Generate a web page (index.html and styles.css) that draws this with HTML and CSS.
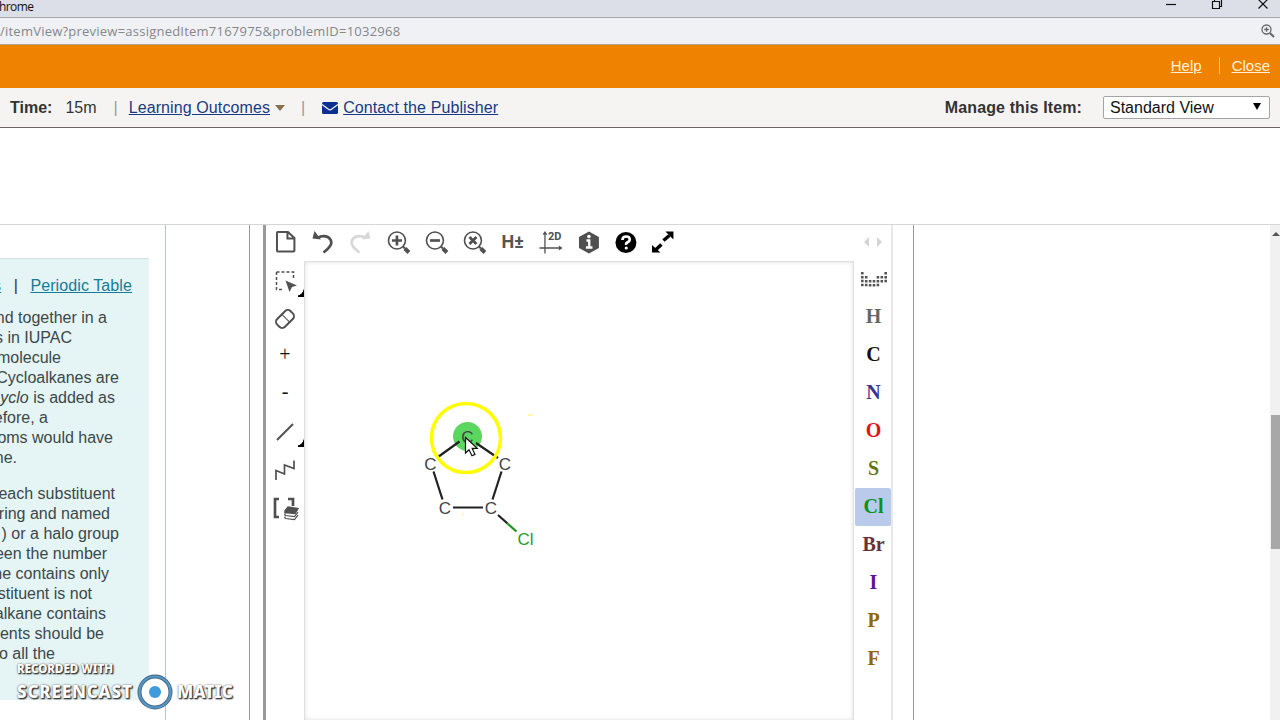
FILE: index.html
```html
<!DOCTYPE html>
<html lang="en">
<head>
    <meta charset="UTF-8">
    <meta name="viewport" content="width=device-width, initial-scale=1.0">
    <title>Item View</title>
    <link rel="stylesheet" href="styles.css">
</head>
<body>
    <div class="titlebar">
        <span class="window-title">hrome</span>
        <div class="window-controls">
            <svg width="12" height="12" viewBox="0 0 12 12"><path d="M1 6.5h10"/></svg>
            <svg width="12" height="12" viewBox="0 0 12 12"><path d="M1.5 3.5h7v7h-7zM3.5 3.5v-2h7v7h-2"/></svg>
            <svg width="12" height="12" viewBox="0 0 12 12"><path d="M1.5 1.5l9 9M10.5 1.5l-9 9"/></svg>
        </div>
    </div>

    <div class="address-bar">
        <span class="url">/itemView?preview=assignedItem7167975&amp;problemID=1032968</span>
        <svg class="zoom-icon" width="14" height="14" viewBox="0 0 14 14"><circle cx="5.5" cy="5.5" r="4.5"/><path d="M3.2 5.5h4.6M5.5 3.2v4.6"/><path class="handle" d="M9 9l4 4"/></svg>
    </div>

    <header class="header">
        <a href="#">Help</a>
        <span class="divider"></span>
        <a href="#">Close</a>
    </header>

    <div class="info-bar">
        <b>Time:</b>
        <span class="time">15m</span>
        <span class="sep">|</span>
        <a href="#">Learning Outcomes</a>
        <span class="caret"></span>
        <span class="sep sep-wide">|</span>
        <svg class="mail" width="16" height="12" viewBox="0 0 16 12"><rect width="16" height="12" rx="1.5" fill="#0b3190"/><path d="M0 2.5L6.5 7.3q1.5 1 3 0L16 2.5" fill="none" stroke="#f6f4f3" stroke-width="1.3"/></svg>
        <a href="#">Contact the Publisher</a>
        <b class="manage">Manage this Item:</b>
        <div class="select"><span>Standard View</span><span class="select-arrow"></span></div>
    </div>

    <div class="spacer"></div>

    <main class="main">
        <section class="hint-pane">
            <div class="hint-box">
                <div class="links"><a href="#">s</a><span>|</span><a href="#">Periodic Table</a></div>
                <p>
                    <span class="line w107">nd together in a</span>
                    <span class="line w72">s in IUPAC</span>
                    <span class="line w61">molecule</span>
                    <span class="line w119">Cycloalkanes are</span>
                    <span class="line w115"><i>yclo</i> is added as</span>
                    <span class="line w48">efore, a</span>
                    <span class="line w113">oms would have</span>
                    <span class="line w17">ne.</span>
                </p>
                <p>
                    <span class="line w115">each substituent</span>
                    <span class="line w110">ring and named</span>
                    <span class="line w119">) or a halo group</span>
                    <span class="line w107">een the number</span>
                    <span class="line w109">ne contains only</span>
                    <span class="line w92">stituent is not</span>
                    <span class="line w106">alkane contains</span>
                    <span class="line w104">ents should be</span>
                    <span class="line w55">o all the</span>
                </p>
            </div>
        </section>
        <div class="gutter"></div>

        <section class="editor">
            <div class="toolbar">
                <svg class="tool" viewBox="0 0 38 36"><path d="M10 7h11l6.5 6v12.5q0 1-1 1h-15.5q-1 0-1-1v-17.500q0-1 1-1zM20.500 7v6.500h7"/></svg>
                <svg class="tool" viewBox="0 0 38 36"><path class="thick" d="M14 12.500q9-3.500 12.500 2t-7 13"/><path class="solid" d="M8.500 13.500l2-7.500 6.500 8.500z"/></svg>
                <svg class="tool faded" viewBox="0 0 38 36"><path class="thick" d="M23 12.500q-9-3.500-12.500 2t7 13"/><path class="solid" d="M28.500 13.500l-2-7.500-6.500 8.500z"/></svg>
                <svg class="tool" viewBox="0 0 38 36"><circle class="lens" cx="17" cy="15.500" r="8.500"/><path class="thick" d="M12 15.500h10M17 10.500v10"/><path d="M23 21.500l2 2"/><path class="handle" d="M25 23.500l4 4"/></svg>
                <svg class="tool" viewBox="0 0 38 36"><circle class="lens" cx="17" cy="15.500" r="8.500"/><path class="thick" d="M12 15.500h10"/><path d="M23 21.500l2 2"/><path class="handle" d="M25 23.500l4 4"/></svg>
                <svg class="tool" viewBox="0 0 38 36"><circle class="lens" cx="17" cy="15.500" r="8.500"/><path class="thick" d="M13.500 12l7 7M20.500 12l-7 7"/><path d="M23 21.500l2 2"/><path class="handle" d="M25 23.500l4 4"/></svg>
                <span class="tool hydrogen">H±</span>
                <svg class="tool" viewBox="0 0 38 36"><path class="thin" d="M13 7.500v21M7.500 23h21.500M11.300 9.500l1.700-2.500 1.700 2.500M27 21.300l2.500 1.700-2.500 1.700"/><text x="16" y="15">2D</text></svg>
                <svg class="tool" viewBox="0 0 38 36"><path class="solid" d="M19 6.500l10 5.500v11l-10 5.500-10-5.500v-11z"/><path d="M16.500 15.500h2.800v7M16 22.500h6.500" stroke="#fff" stroke-width="2.300"/><circle cx="19" cy="11.500" r="1.800" fill="#fff" stroke="none"/></svg>
                <svg class="tool" viewBox="0 0 38 36"><circle cx="18" cy="17.500" r="10.500" fill="#000" stroke="none"/><path d="M14.500 15q0-3.500 3.700-3.500t3.600 3q0 1.700-2 2.700t-1.500 2.600" stroke="#fff" stroke-width="2.700"/><circle cx="18.300" cy="23" r="1.600" fill="#fff" stroke="none"/></svg>
                <svg class="tool" viewBox="0 0 38 36"><path d="M18.500 15.500l6-5M16.500 19.500l-5.500 5" stroke="#000" stroke-width="3.500"/><path d="M20.500 6.500h8v8zM7 20v7.500h8.500z" fill="#000" stroke="none"/></svg>
                <div class="nav-arrows"><span class="prev"></span><span class="next"></span></div>
            </div>

            <div class="workspace">
                <div class="side-tools">
                    <div class="side-tool">
                        <svg width="24" height="24" viewBox="0 0 24 24"><path d="M3.500 3h17v7M3.500 3v17.500h7" stroke-width="1.500" stroke-dasharray="3 2" fill="none"/><path d="M12.500 11.500l11.500 5-5 1.500-2.500 5z" fill="#505050" stroke="none"/></svg>
                        <span class="corner"></span>
                    </div>
                    <div class="side-tool">
                        <svg width="24" height="24" viewBox="0 0 24 24"><g transform="rotate(-45 12 12)"><rect x="2.500" y="6.500" width="19" height="11" rx="4" stroke-width="2"/><path d="M13 6.500v11" stroke-width="1"/></g></svg>
                    </div>
                    <div class="side-tool"><span class="sign">+</span></div>
                    <div class="side-tool"><span class="sign minus">-</span></div>
                    <div class="side-tool">
                        <svg width="24" height="24" viewBox="0 0 24 24"><path d="M4 20L20 4" stroke-width="2"/></svg>
                        <span class="corner"></span>
                    </div>
                    <div class="side-tool">
                        <svg width="24" height="24" viewBox="0 0 24 24"><path d="M3 22v-9.500l8.500 3.500v-9l9.500 3.500v-8" stroke-width="1.700"/></svg>
                    </div>
                    <div class="side-tool">
                        <svg width="28" height="26" viewBox="0 0 28 26"><path d="M8 3H4v18h4M17 3h5v7" stroke-width="2.700"/><path d="M14 15l3-4 10 1.500-3 5-10-1z" fill="#505050" stroke-width="1.500"/><path d="M14.500 17.500q-1.500 1.500 0 2l9 1.200 3.500-4.500M14.500 20.500q-1.500 1.500 0 2l9 1.200 3.500-4.500" stroke-width="1.200"/></svg>
                    </div>
                </div>

                <div class="canvas">
                    <svg width="548" height="459" viewBox="305 261 548 459">
                        <circle class="hover-atom" cx="467.500" cy="436.500" r="14.500"/>
                        <path class="bond" d="M459.500 441.500L438 457M476 443l22 15M433.500 471.500l9 28M501.500 471.500l-9 28M453 507.500h30M498 515l9.500 8.500"/>
                        <path class="bond bond-cl" d="M507.500 523.500l9 8"/>
                        <text class="atom" x="467.500" y="443">C</text>
                        <text class="atom" x="430.500" y="470">C</text>
                        <text class="atom" x="505" y="470">C</text>
                        <text class="atom" x="445" y="513.500">C</text>
                        <text class="atom" x="491" y="513.500">C</text>
                        <text class="atom atom-cl" x="525.500" y="545">Cl</text>
                        <circle class="click-ring" cx="466" cy="438" r="34.500"/>
                        <path d="M528 415h5M462 514h2" stroke="#ffee55"/>
                        <path class="pointer" d="M465.500 437.500v15.500l3.500-3.300 3 6 3-1.300-2.800-6h5z"/>
                    </svg>
                </div>

                <div class="elements">
                    <div class="periodic">
                        <svg width="26" height="15" viewBox="0 0 26 15"><path stroke-dasharray="2.500 1.400" d="M1.300 0v15M5.200 4v11M9.100 8v7M13 8v7M16.900 4v11M20.800 4v7M24.700 0v11"/></svg>
                    </div>
                    <div class="element el-h">H</div>
                    <div class="element el-c">C</div>
                    <div class="element el-n">N</div>
                    <div class="element el-o">O</div>
                    <div class="element el-s">S</div>
                    <div class="element el-cl selected">Cl</div>
                    <div class="element el-br">Br</div>
                    <div class="element el-i">I</div>
                    <div class="element el-p">P</div>
                    <div class="element el-f">F</div>
                </div>
            </div>
        </section>

        <div class="blank"></div>
        <div class="scrollbar"><span class="scroll-up"></span><span class="thumb"></span></div>
    </main>

    <div class="watermark">
        <div class="wm-top">RECORDED WITH</div>
        <div class="wm-row">
            <span class="wm-left">SCREENCAST</span>
            <svg width="36" height="36" viewBox="0 0 36 36"><circle cx="18" cy="18" r="15.500" fill="#fff" stroke="#45647c" stroke-width="4"/><circle cx="18" cy="18" r="15.500" fill="none" stroke="#5598ca" stroke-width="2.200"/><circle cx="18" cy="18" r="6" fill="#409bdb"/></svg>
            <span class="wm-right">MATIC</span>
        </div>
    </div>
</body>
</html>
```

FILE: styles.css
```css
* {
    margin: 0;
    padding: 0;
    box-sizing: border-box;
}

body {
    width: 1280px;
    height: 720px;
    overflow: hidden;
    display: flex;
    flex-direction: column;
    font-family: "Liberation Sans", Arial, sans-serif;
    font-size: 16px;
    color: #333;
    background: #fff;
    position: relative;
}

svg {
    display: block;
    flex-shrink: 0;
}

/* Browser chrome */
.titlebar {
    height: 18px;
    flex-shrink: 0;
    display: flex;
    justify-content: space-between;
    background: #dcdfe7;
    border-bottom: 1px solid #a6a6a8;
}

.window-title {
    margin-left: -1px;
    font: 12px/13px "Open Sans", sans-serif;
    letter-spacing: -0.6px;
    color: #111;
}

.window-controls {
    display: flex;
    gap: 34px;
    margin: -2px 11px 0 0;
}

.window-controls svg {
    fill: none;
    stroke: #111;
    stroke-width: 1.2;
}

.address-bar {
    height: 27px;
    flex-shrink: 0;
    display: flex;
    align-items: center;
    justify-content: space-between;
    padding-right: 5px;
    background: #eff1f5;
    border-bottom: 1px solid #b3a596;
}

.url {
    font: 13px/26px "Open Sans", sans-serif;
    letter-spacing: 0.23px;
    color: #85878a;
}

.zoom-icon {
    fill: none;
    stroke: #666;
    stroke-width: 1.3;
}

.zoom-icon .handle {
    stroke-width: 2;
}

.header {
    height: 43px;
    flex-shrink: 0;
    display: flex;
    align-items: center;
    justify-content: flex-end;
    padding: 0 10px 2px 0;
    background: #ef8200;
    font-size: 15px;
}

.header a {
    color: #fff3dc;
}

.divider {
    width: 1px;
    height: 17px;
    margin: 0 12px 0 17px;
    background: #f9cd94;
}

.info-bar {
    height: 40px;
    flex-shrink: 0;
    display: flex;
    align-items: center;
    padding: 0 10px;
    background: #f6f4f3;
    border-bottom: 1px solid #6b6463;
    white-space: nowrap;
}

.info-bar a {
    color: #163b83;
    letter-spacing: 0.1px;
}

.time {
    margin-left: 13px;
}

.sep {
    margin: 0 11px 0 17px;
    color: #999;
}

.sep-wide {
    margin: 0 17px 0 16px;
}

.caret {
    margin-left: 5px;
    border: 5px solid transparent;
    border-top: 6px solid #87704f;
    border-bottom: 0;
}

.mail {
    margin-right: 5px;
}

.manage {
    margin-left: auto;
    letter-spacing: 0.12px;
}

.select {
    width: 167px;
    height: 23px;
    margin: -1px 0 0 21px;
    padding: 1px 8px 0 6px;
    display: flex;
    align-items: center;
    justify-content: space-between;
    background: #fff;
    border: 1px solid #a5a3a3;
    border-radius: 2px;
    color: #111;
}

.select-arrow {
    margin-top: -2px;
    border: 4px solid transparent;
    border-top: 7px solid #000;
    border-bottom: 0;
}

.spacer {
    height: 97px;
    flex-shrink: 0;
    border-bottom: 1px solid #d6d6d6;
}

.main {
    height: 495px;
    display: flex;
}

/* Hint text */
.hint-pane {
    width: 166px;
    height: 495px;
    padding-top: 33px;
    border-right: 1px solid #b7c4d1;
}

.hint-box {
    width: 149px;
    height: 442px;
    padding-top: 17px;
    overflow: hidden;
    background: #e5f4f5;
    border-top: 1px solid #d3dfe0;
    line-height: 20px;
}

.links {
    width: 132px;
    display: flex;
    justify-content: flex-end;
    gap: 12.5px;
    margin-bottom: 12px;
    white-space: nowrap;
}

.links a {
    color: #147c99;
    letter-spacing: 0.1px;
}

.hint-box p {
    margin-bottom: 16px;
}

/* every line ends at a fixed width and is cut off at the left edge */
.line {
    display: flex;
    justify-content: flex-end;
    white-space: pre;
    color: #3b4849;
}

.w17 { width: 17px; }
.w48 { width: 48px; }
.w55 { width: 55px; }
.w61 { width: 61px; }
.w72 { width: 72px; }
.w92 { width: 92px; }
.w104 { width: 104px; }
.w106 { width: 106px; }
.w107 { width: 107px; }
.w109 { width: 109px; }
.w110 { width: 110px; }
.w113 { width: 113px; }
.w115 { width: 115px; }
.w119 { width: 119px; }

.gutter {
    width: 84px;
    border-right: 1px solid #999;
    margin-right: 13px;
}

/* Molecule editor */
.editor {
    width: 630px;
    border-left: 3px solid #999;
}

.toolbar {
    height: 36px;
    padding-left: 0.5px;
    display: flex;
}

.tool {
    width: 37.9px;
    height: 36px;
    fill: none;
    stroke: #505050;
    stroke-width: 2;
}

.tool .lens {
    stroke-width: 1.6;
}

.tool .thick {
    stroke-width: 2.7;
}

.tool .thin {
    stroke-width: 1.3;
}

.tool .handle {
    stroke-width: 4;
}

.tool .solid {
    fill: #505050;
    stroke: none;
}

.tool text {
    font: bold 11px Roboto, sans-serif;
    fill: #505050;
    stroke: none;
}

.faded {
    opacity: 0.22;
}

.hydrogen {
    font: bold 18px/33px Roboto, sans-serif;
    color: #555;
    text-align: center;
}

.nav-arrows {
    display: flex;
    align-items: center;
    gap: 8px;
    margin: 0 11px 2px auto;
}

.nav-arrows span {
    border: 5px solid transparent;
}

.nav-arrows .prev {
    border-right-color: #d4d4d4;
    border-left: 0;
}

.nav-arrows .next {
    border-left-color: #d4d4d4;
    border-right: 0;
}

.workspace {
    height: 459px;
    display: flex;
}

.side-tools {
    width: 38px;
    display: grid;
    grid-template-rows: 40px 35px 36px 41px 38px 38px 39px;
    align-content: start;
}

.side-tool {
    position: relative;
    display: flex;
    align-items: center;
    justify-content: center;
}

.side-tool svg {
    fill: none;
    stroke: #505050;
    stroke-width: 2;
}

.sign {
    font: 20px/20px "Liberation Serif", serif;
    color: #111;
}

.minus {
    margin-top: -3px;
}

.corner {
    position: absolute;
    right: 0;
    bottom: 4px;
    width: 6px;
    height: 9px;
    background: radial-gradient(circle at -2px 0, transparent 7.5px, #000 8px);
}

.canvas {
    width: 550px;
    border: 1px solid #e0e0e0;
    border-bottom: 0;
    box-shadow: inset 0 0 4px #ddd;
}

.canvas svg {
    margin-top: -1px;
}

.hover-atom {
    fill: #5bd65f;
}

.bond {
    fill: none;
    stroke: #222;
    stroke-width: 2.2;
}

.bond-cl {
    stroke: #1c911c;
}

.atom {
    font: 17px "Liberation Sans", sans-serif;
    text-anchor: middle;
    fill: #444;
}

.atom-cl {
    fill: #289c28;
}

.click-ring {
    fill: none;
    stroke: #ffff00;
    stroke-width: 3.5;
}

.pointer {
    fill: #fff;
    stroke: #111;
    stroke-width: 1.2;
}

.elements {
    width: 39px;
    border-right: 2px solid #e8e8e8;
    margin-top: -36px;
    padding-top: 36px;
}

.periodic {
    height: 37px;
    padding-left: 2px;
    display: flex;
    align-items: center;
    justify-content: center;
}

.periodic svg {
    stroke: #555;
    stroke-width: 2.6;
}

.element {
    height: 38px;
    margin-left: 1px;
    padding-left: 1px;
    font: bold 20px/36px "Liberation Serif", serif;
    text-align: center;
}

.selected {
    background: #b9caeb;
    border-radius: 2px;
}

.el-h { color: #666; }
.el-c { color: #111; }
.el-n { color: #393391; }
.el-o { color: #e41414; }
.el-s { color: #667514; }
.el-cl { color: #089314; }
.el-br { color: #663339; }
.el-i { color: #611198; }
.el-p { color: #936500; }
.el-f { color: #936500; }

.blank {
    flex: 1;
    margin-left: 20px;
    border-left: 1px solid #999;
}

.scrollbar {
    width: 10px;
    padding-top: 7px;
    display: flex;
    flex-direction: column;
    align-items: flex-end;
    background: #f1f1f1;
}

.scroll-up {
    border: 4px solid transparent;
    border-top: 0;
    border-bottom: 4px solid #555;
    margin-bottom: 179px;
}

.thumb {
    width: 9px;
    height: 134px;
    background: #a8a8a8;
}

/* Recorder mark over the page */
.watermark {
    position: absolute;
    left: 17px;
    top: 662px;
    font-family: "Noto Sans", sans-serif;
    font-weight: 800;
    color: #fff;
    text-shadow: 1px 1px 1px #333, 0 0 2px #666, 1px 1px 2px #444;
}

.wm-top {
    font-size: 11.5px;
    line-height: 14px;
}

.wm-row {
    display: flex;
    align-items: center;
    gap: 4px;
    margin-top: -2px;
    font-size: 17px;
    line-height: 36px;
}

.wm-left {
    width: 116px;
    letter-spacing: 0.85px;
}

.wm-right {
    letter-spacing: 0.2px;
}
```
